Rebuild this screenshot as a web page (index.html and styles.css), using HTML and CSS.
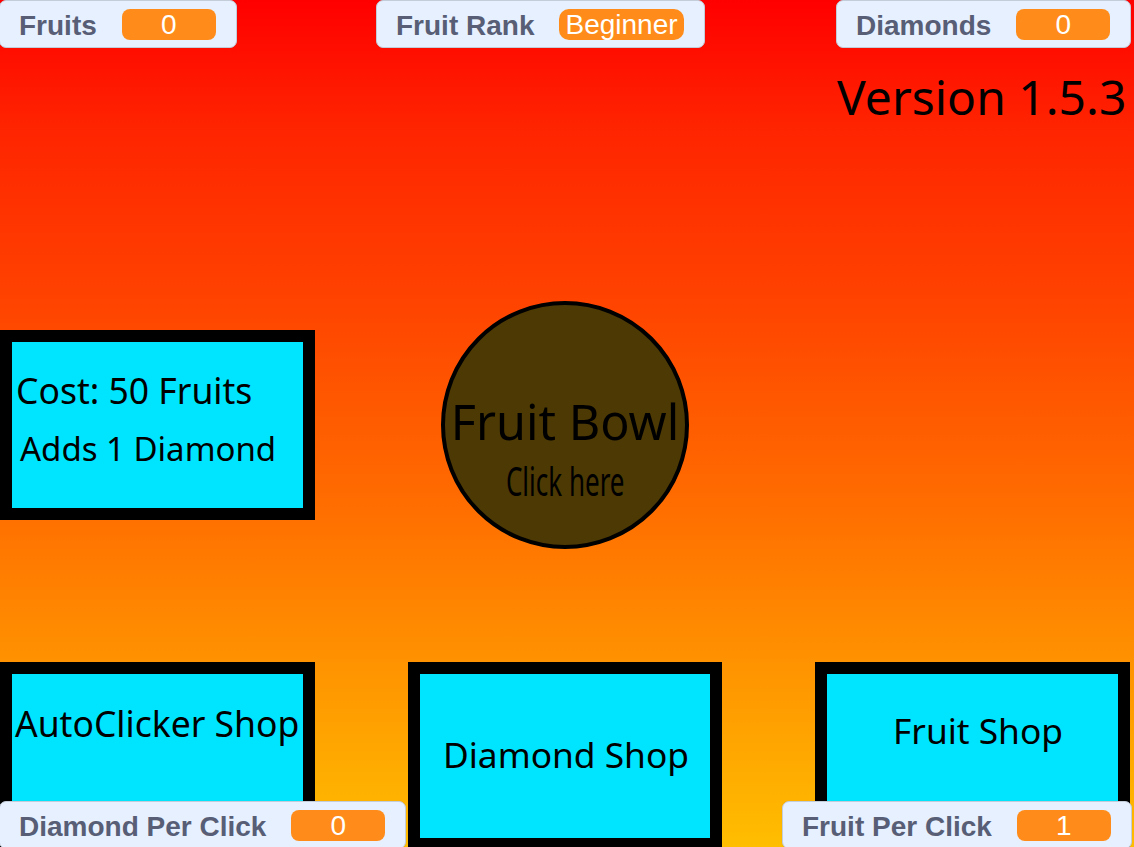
FILE: index.html
```html
<!DOCTYPE html>
<html>
<head>
<meta charset="utf-8">
<link rel="stylesheet" href="styles.css">
</head>
<body>
<div class="stage">
  <div class="sprite version">Version 1.5.3</div>

  <div class="sprite box box-upgrade">
    <div class="box-inner upgrade-inner">
      <div class="line cost">Cost: 50 Fruits</div>
      <div class="line adds">Adds 1 Diamond</div>
    </div>
  </div>

  <div class="sprite bowl">
    <div class="bowl-title">Fruit Bowl</div>
    <div class="bowl-sub">Click here</div>
  </div>

  <div class="sprite box box-auto">
    <div class="box-inner auto-inner"><span>AutoClicker Shop</span></div>
  </div>
  <div class="sprite box box-diamond">
    <div class="box-inner diamond-inner"><span>Diamond Shop</span></div>
  </div>
  <div class="sprite box box-fruit">
    <div class="box-inner fruit-inner"><span>Fruit Shop</span></div>
  </div>

  <div class="monitor mon-fruits"><span class="mon-label">Fruits</span><span class="mon-value">0</span></div>
  <div class="monitor mon-rank"><span class="mon-label">Fruit Rank</span><span class="mon-value wide">Beginner</span></div>
  <div class="monitor mon-diamonds"><span class="mon-label">Diamonds</span><span class="mon-value">0</span></div>
  <div class="monitor mon-dpc"><span class="mon-label">Diamond Per Click</span><span class="mon-value">0</span></div>
  <div class="monitor mon-fpc"><span class="mon-label">Fruit Per Click</span><span class="mon-value">1</span></div>
</div>
</body>
</html>
```

FILE: styles.css
```css
html, body {
  margin: 0;
  padding: 0;
  overflow: hidden;
}

.stage {
  position: relative;
  width: 1134px;
  height: 847px;
  overflow: hidden;
  background: linear-gradient(180deg, #ff0000 0%, #ff2400 15%, #ff4200 35%, #ff6a00 58%, #ff8c00 75%, #ffa600 88%, #ffbe00 100%);
  font-family: "Noto Sans", "Open Sans", sans-serif;
  color: #000;
}

.sprite {
  position: absolute;
}

.version {
  left: 837px;
  top: 67px;
  font-size: 48px;
  line-height: 60px;
  white-space: nowrap;
}

.box {
  background: #000;
  padding: 12px;
  box-sizing: border-box;
}

.box-inner {
  background: #00e5ff;
  width: 100%;
  height: 100%;
  box-sizing: border-box;
}

.box-upgrade {
  left: 0;
  top: 330px;
  width: 315px;
  height: 190px;
}

.upgrade-inner {
  display: flex;
  flex-direction: column;
  padding: 24px 0 0 4px;
  gap: 11px;
}

.line {
  line-height: 48px;
  white-space: nowrap;
}

.cost {
  font-size: 35.5px;
}

.adds {
  font-size: 33px;
  padding-left: 4px;
}

.bowl {
  left: 441px;
  top: 301px;
  width: 248px;
  height: 248px;
  box-sizing: border-box;
  border: 4px solid #000;
  border-radius: 50%;
  background: #4d3904;
  display: flex;
  flex-direction: column;
  align-items: center;
  padding-top: 88px;
}

.bowl-title {
  font-size: 48.5px;
  line-height: 56px;
  white-space: nowrap;
}

.bowl-sub {
  font-size: 40px;
  line-height: 44px;
  transform: scaleX(0.65);
  white-space: nowrap;
  margin-top: 10px;
}

.box-auto {
  left: 0;
  top: 662px;
  width: 315px;
  height: 200px;
}

.auto-inner {
  padding: 24px 0 0 3px;
  font-size: 35.5px;
  line-height: 50px;
  white-space: nowrap;
}

.box-diamond {
  left: 408px;
  top: 662px;
  width: 314px;
  height: 188px;
}

.diamond-inner {
  padding: 55px 0 0 23px;
  font-size: 35.3px;
  line-height: 50px;
  white-space: nowrap;
}

.box-fruit {
  left: 815px;
  top: 662px;
  width: 315px;
  height: 200px;
}

.fruit-inner {
  padding: 31px 0 0 66px;
  font-size: 35.3px;
  line-height: 50px;
  white-space: nowrap;
}

.monitor {
  position: absolute;
  display: flex;
  align-items: center;
  gap: 25px;
  height: 48px;
  box-sizing: border-box;
  padding: 0 20px 0 19px;
  background: #e6f0ff;
  border: 1px solid #c3ccd9;
  border-radius: 7px;
  font-family: "Liberation Sans", Arial, sans-serif;
  box-shadow: 0 0 1px rgba(0,0,0,0.1);
}

.mon-label {
  font-weight: bold;
  font-size: 28px;
  line-height: 32px;
  color: #575e75;
  white-space: nowrap;
  padding-top: 3px;
}

.mon-value {
  background: #ff8c1a;
  color: #fff;
  font-size: 28px;
  line-height: 31px;
  height: 31px;
  min-width: 94px;
  border-radius: 8px;
  text-align: center;
  padding: 0 6px;
  box-sizing: border-box;
  white-space: nowrap;
  margin-top: 1px;
}

.mon-value.wide {
  border-radius: 10px;
}

.mon-fruits {
  left: -1px;
  top: 0;
}

.mon-rank {
  left: 376px;
  top: 0;
}

.mon-diamonds {
  left: 836px;
  top: 0;
}

.mon-dpc {
  left: -1px;
  top: 801px;
}

.mon-fpc {
  left: 782px;
  top: 801px;
}
```
